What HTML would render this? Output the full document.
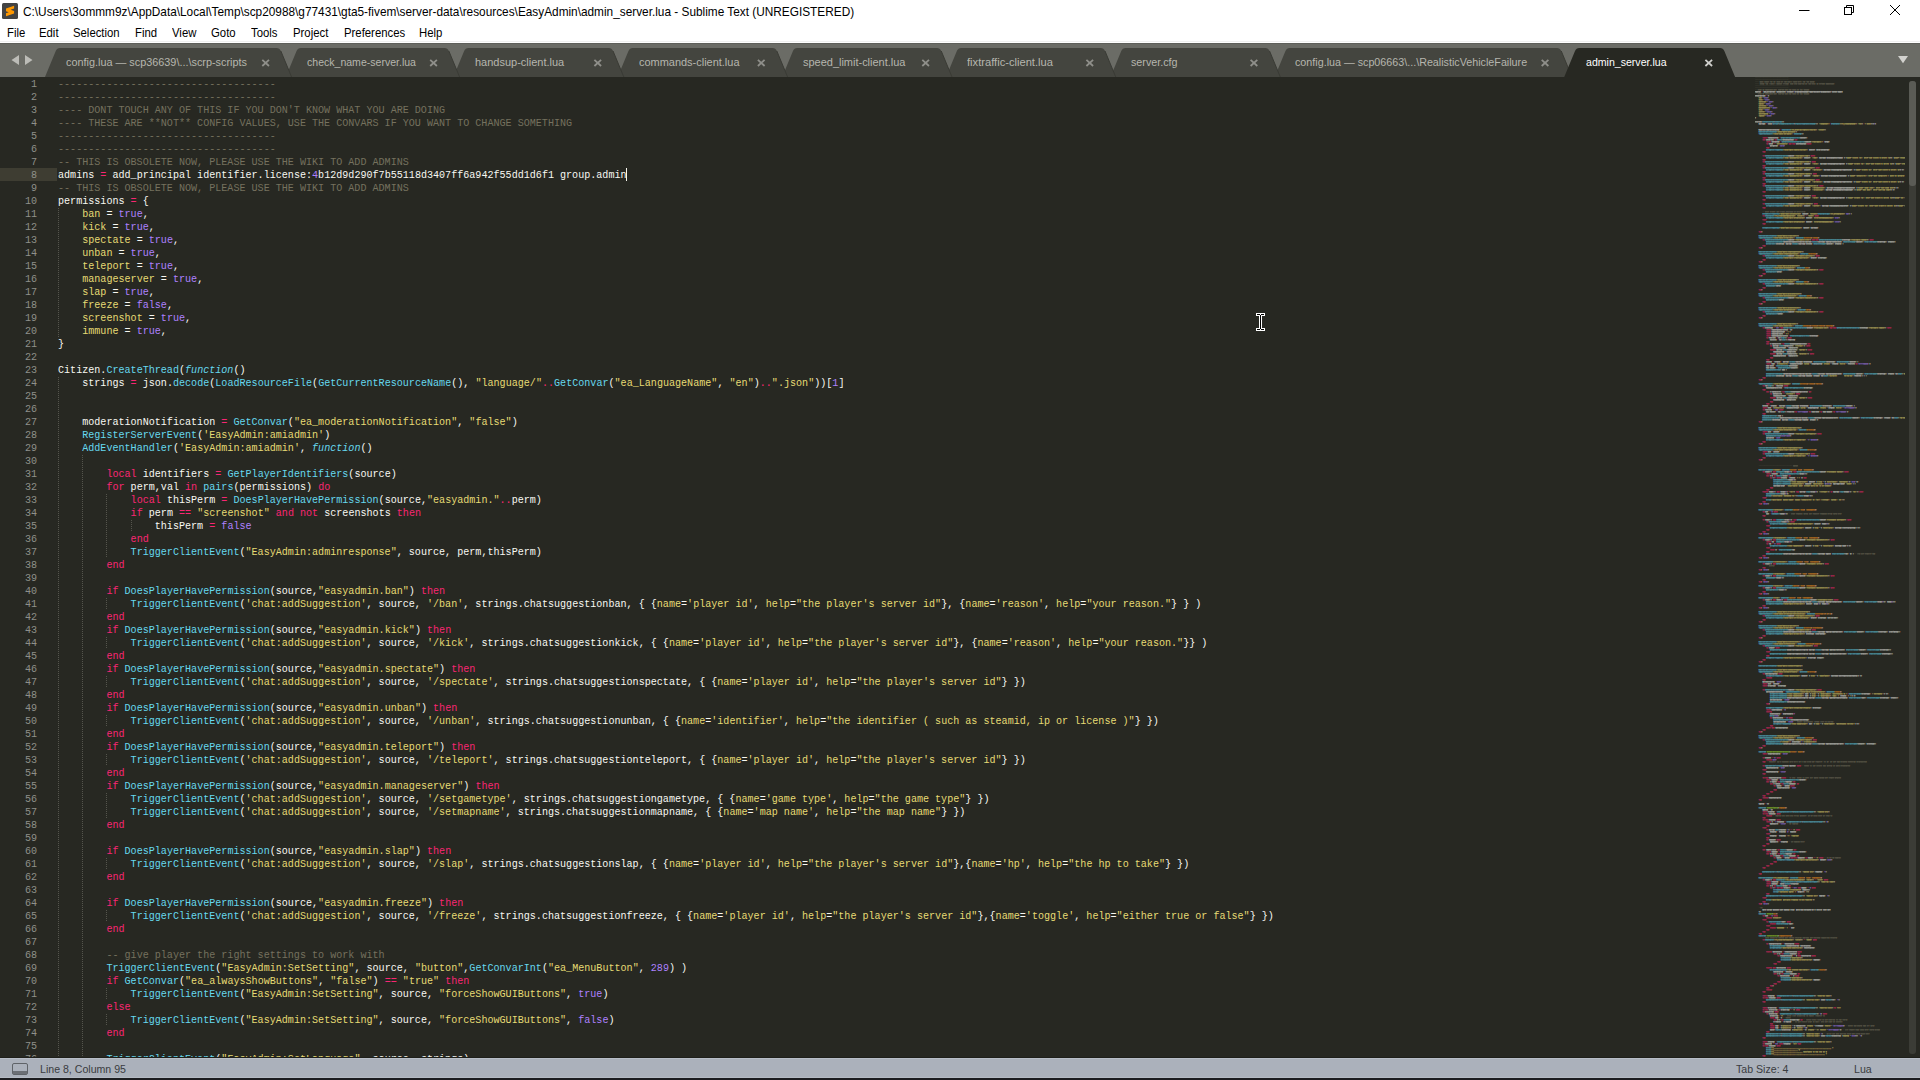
<!DOCTYPE html>
<html><head><meta charset="utf-8"><title>admin_server.lua - Sublime Text</title>
<style>*{margin:0;padding:0;box-sizing:border-box}
html,body{width:1920px;height:1080px;overflow:hidden;background:#fff;position:relative;font-family:"Liberation Sans",sans-serif}
.abs{position:absolute}
#title{position:absolute;left:23px;top:3px;font-size:12.8px;line-height:18px;color:#000;white-space:pre;transform:scaleX(0.924);transform-origin:0 0}
.menu{position:absolute;top:24px;font-size:12px;line-height:18px;color:#000;white-space:pre;transform:scaleX(0.945);transform-origin:0 0}
#tabbar{position:absolute;left:0;top:43px;width:1920px;height:34px;background:#6b6c66;border-top:1px solid #5e5f5a}
.tab{position:absolute;top:48px;height:29px}
.tab svg{position:absolute;left:0;top:0;overflow:visible}
.tabt{position:absolute;top:52.5px;font-size:11.6px;line-height:18px;color:#b6b6ae;white-space:pre;transform-origin:0 0}
.tabx{position:absolute;top:59px;width:8px;height:8px}
#editor{position:absolute;left:0;top:77px;width:1920px;height:981px;background:#272822;overflow:hidden}
pre{font-family:"Liberation Mono",monospace;font-size:10.08px;line-height:13px;white-space:pre}
#code{position:absolute;left:58px;top:78px;color:#f8f8f2}
#nums{position:absolute;left:0;width:37px;top:78px;color:#8f908a;text-align:right}
i{font-style:normal}
i.c{color:#75715e} i.s{color:#e6db74} i.k{color:#f92672} i.F{color:#66d9ef} i.n{color:#ae81ff} i.p{color:#fd971f;font-style:italic} i.d{color:#a6e22e} i.f{color:#66d9ef;font-style:italic}
.g{position:absolute;width:1px;background-image:linear-gradient(to bottom,transparent 0,transparent 1px,#55554d 1px,#55554d 2px);background-size:1px 2px}
#mini{position:absolute;left:1755px;top:77px;transform-origin:0 0;transform:scale(0.15385);color:#f8f8f2;-webkit-text-stroke:1.4px currentColor;text-shadow:0 2px 0 currentColor,0 -2px 0 currentColor,0 4px 0 currentColor,0 -4px 0 currentColor;opacity:.55}
#status{position:absolute;left:0;top:1058px;width:1920px;height:20px;background:#abb1bb;border-top:1px solid #b8bec8;border-bottom:1px solid #b5bbc4}
#bottom{position:absolute;left:0;top:1078px;width:1920px;height:2px;background:#1c1d20}
.st{position:absolute;top:1062px;font-size:10.6px;line-height:14px;color:#3a3c40;white-space:pre}
</style></head>
<body>
<!-- title bar -->
<div class="abs" style="left:2px;top:3px;width:16px;height:16px;background:#434343;border-radius:1.5px"></div>
<svg class="abs" style="left:2px;top:3px" width="16" height="16" viewBox="0 0 16 16"><path d="M12.1 2.8 L12.1 5.6 L8.6 6.8 L12.1 8.1 L12.1 10.6 L4.0 13.2 L4.0 10.3 L6.8 9.3 L4.0 8.2 L4.0 5.4 Z" fill="#ff9800"/></svg>
<div id="title">C:\Users\3ommm9z\AppData\Local\Temp\scp20988\g77431\gta5-fivem\server-data\resources\EasyAdmin\admin_server.lua - Sublime Text (UNREGISTERED)</div>
<svg class="abs" style="left:1790px;top:0" width="130" height="22" viewBox="0 0 130 22">
<line x1="9" y1="10.5" x2="19.5" y2="10.5" stroke="#000" stroke-width="1"/>
<rect x="54.5" y="7.5" width="7" height="7" fill="none" stroke="#000" stroke-width="1"/>
<path d="M56.5 7.5 V5.5 H63.5 V12.5 H61.5" fill="none" stroke="#000" stroke-width="1"/>
<path d="M100 5 L110 15 M110 5 L100 15" stroke="#000" stroke-width="1"/>
</svg>
<div class="menu" style="left:7px">File</div>
<div class="menu" style="left:39px">Edit</div>
<div class="menu" style="left:73px">Selection</div>
<div class="menu" style="left:135px">Find</div>
<div class="menu" style="left:172px">View</div>
<div class="menu" style="left:211px">Goto</div>
<div class="menu" style="left:251px">Tools</div>
<div class="menu" style="left:293px">Project</div>
<div class="menu" style="left:344px">Preferences</div>
<div class="menu" style="left:419px">Help</div>
<div class="abs" style="left:0;top:41px;width:1920px;height:1px;background:#f0f0f0"></div>
<!-- tab bar -->
<div id="tabbar"></div>
<svg class="abs" style="left:0;top:48px" width="1920" height="29" viewBox="0 0 1920 29">
<path d="M1274.70 29 L1285.46 3.00 Q1286.70 0 1289.70 0 L1557.00 0 Q1560.00 0 1561.24 3.00 L1572.00 29 Z" fill="#44453f"/>
<path d="M1561.24 3.00 L1572.00 29" stroke="#3a3b35" stroke-width="1" fill="none"/>
<path d="M1110.50 29 L1121.26 3.00 Q1122.50 0 1125.50 0 L1265.30 0 Q1268.30 0 1269.54 3.00 L1280.30 29 Z" fill="#44453f"/>
<path d="M1269.54 3.00 L1280.30 29" stroke="#3a3b35" stroke-width="1" fill="none"/>
<path d="M946.10 29 L956.86 3.00 Q958.10 0 961.10 0 L1100.75 0 Q1103.75 0 1104.99 3.00 L1115.75 29 Z" fill="#44453f"/>
<path d="M1104.99 3.00 L1115.75 29" stroke="#3a3b35" stroke-width="1" fill="none"/>
<path d="M782.20 29 L792.96 3.00 Q794.20 0 797.20 0 L937.00 0 Q940.00 0 941.24 3.00 L952.00 29 Z" fill="#44453f"/>
<path d="M941.24 3.00 L952.00 29" stroke="#3a3b35" stroke-width="1" fill="none"/>
<path d="M617.70 29 L628.46 3.00 Q629.70 0 632.70 0 L772.60 0 Q775.60 0 776.84 3.00 L787.60 29 Z" fill="#44453f"/>
<path d="M776.84 3.00 L787.60 29" stroke="#3a3b35" stroke-width="1" fill="none"/>
<path d="M453.40 29 L464.16 3.00 Q465.40 0 468.40 0 L608.80 0 Q611.80 0 613.04 3.00 L623.80 29 Z" fill="#44453f"/>
<path d="M613.04 3.00 L623.80 29" stroke="#3a3b35" stroke-width="1" fill="none"/>
<path d="M285.80 29 L296.56 3.00 Q297.80 0 300.80 0 L444.60 0 Q447.60 0 448.84 3.00 L459.60 29 Z" fill="#44453f"/>
<path d="M448.84 3.00 L459.60 29" stroke="#3a3b35" stroke-width="1" fill="none"/>
<path d="M45.00 29 L55.76 3.00 Q57.00 0 60.00 0 L276.60 0 Q279.60 0 280.84 3.00 L291.60 29 Z" fill="#44453f"/>
<path d="M280.84 3.00 L291.60 29" stroke="#3a3b35" stroke-width="1" fill="none"/>
<path d="M1564.25 29 L1575.01 3.00 Q1576.25 0 1579.25 0 L1720.10 0 Q1723.10 0 1724.34 3.00 L1735.10 29 Z" fill="#272822"/>
<path d="M262.30 11.8 L269.00 18 M269.00 11.8 L262.30 18" stroke="#8f8f8a" stroke-width="1.8"/>
<path d="M430.20 11.8 L436.90 18 M436.90 11.8 L430.20 18" stroke="#8f8f8a" stroke-width="1.8"/>
<path d="M594.40 11.8 L601.10 18 M601.10 11.8 L594.40 18" stroke="#8f8f8a" stroke-width="1.8"/>
<path d="M757.90 11.8 L764.60 18 M764.60 11.8 L757.90 18" stroke="#8f8f8a" stroke-width="1.8"/>
<path d="M922.30 11.8 L929.00 18 M929.00 11.8 L922.30 18" stroke="#8f8f8a" stroke-width="1.8"/>
<path d="M1086.40 11.8 L1093.10 18 M1093.10 11.8 L1086.40 18" stroke="#8f8f8a" stroke-width="1.8"/>
<path d="M1250.60 11.8 L1257.30 18 M1257.30 11.8 L1250.60 18" stroke="#8f8f8a" stroke-width="1.8"/>
<path d="M1541.70 11.8 L1548.40 18 M1548.40 11.8 L1541.70 18" stroke="#8f8f8a" stroke-width="1.8"/>
<path d="M1705.40 11.8 L1712.10 18 M1712.10 11.8 L1705.40 18" stroke="#cfcfcc" stroke-width="1.8"/>
<path d="M11.5 12 L19 7 L19 17 Z M32.5 12 L25 7 L25 17 Z" fill="#bcbcb7"/>
<path d="M1898 8 L1908 8 L1903 15.2 Z" fill="#d2d2ce"/>
</svg>
<div class="tabt" style="left:65.80px;transform:scaleX(0.936)">config.lua — scp36639\...\scrp-scripts</div>
<div class="tabt" style="left:306.90px;transform:scaleX(0.909)">check_name-server.lua</div>
<div class="tabt" style="left:474.80px;transform:scaleX(0.948)">handsup-client.lua</div>
<div class="tabt" style="left:638.75px;transform:scaleX(0.945)">commands-client.lua</div>
<div class="tabt" style="left:803.10px;transform:scaleX(0.946)">speed_limit-client.lua</div>
<div class="tabt" style="left:967.10px;transform:scaleX(0.962)">fixtraffic-client.lua</div>
<div class="tabt" style="left:1130.90px;transform:scaleX(0.926)">server.cfg</div>
<div class="tabt" style="left:1295.00px;transform:scaleX(0.926)">config.lua — scp06663\...\RealisticVehicleFailure</div>
<div class="tabt" style="left:1586.25px;color:#fff;transform:scaleX(0.912)">admin_server.lua</div>
<!-- editor -->
<div id="editor"></div>
<div class="abs" style="left:0;top:168px;width:57px;height:13px;background:#3e3d32"></div>
<div class="g" style="left:58px;top:207px;height:130px"></div><div class="g" style="left:58px;top:376px;height:689px"></div><div class="g" style="left:82px;top:454px;height:611px"></div><div class="g" style="left:106px;top:493px;height:65px"></div><div class="g" style="left:106px;top:597px;height:13px"></div><div class="g" style="left:106px;top:636px;height:13px"></div><div class="g" style="left:106px;top:675px;height:13px"></div><div class="g" style="left:106px;top:714px;height:13px"></div><div class="g" style="left:106px;top:753px;height:13px"></div><div class="g" style="left:106px;top:792px;height:26px"></div><div class="g" style="left:106px;top:857px;height:13px"></div><div class="g" style="left:106px;top:909px;height:13px"></div><div class="g" style="left:106px;top:987px;height:13px"></div><div class="g" style="left:106px;top:1013px;height:13px"></div><div class="g" style="left:131px;top:519px;height:13px"></div>
<pre id="nums">1
2
3
4
5
6
7
8
9
10
11
12
13
14
15
16
17
18
19
20
21
22
23
24
25
26
27
28
29
30
31
32
33
34
35
36
37
38
39
40
41
42
43
44
45
46
47
48
49
50
51
52
53
54
55
56
57
58
59
60
61
62
63
64
65
66
67
68
69
70
71
72
73
74
75
76</pre>
<pre id="code"><i class="c">------------------------------------</i>
<i class="c">------------------------------------</i>
<i class="c">---- DONT TOUCH ANY OF THIS IF YOU DON'T KNOW WHAT YOU ARE DOING</i>
<i class="c">---- THESE ARE **NOT** CONFIG VALUES, USE THE CONVARS IF YOU WANT TO CHANGE SOMETHING</i>
<i class="c">------------------------------------</i>
<i class="c">------------------------------------</i>
<i class="c">-- THIS IS OBSOLETE NOW, PLEASE USE THE WIKI TO ADD ADMINS</i>
admins <i class="k">=</i> add_principal identifier.license:<i class="n">4</i>b12d9d290f7b55118d3407ff6a942f55dd1d6f1 group.admin
<i class="c">-- THIS IS OBSOLETE NOW, PLEASE USE THE WIKI TO ADD ADMINS</i>
permissions <i class="k">=</i> {
    <i class="s">ban</i> = <i class="n">true</i>,
    <i class="s">kick</i> = <i class="n">true</i>,
    <i class="s">spectate</i> = <i class="n">true</i>,
    <i class="s">unban</i> = <i class="n">true</i>,
    <i class="s">teleport</i> = <i class="n">true</i>,
    <i class="s">manageserver</i> = <i class="n">true</i>,
    <i class="s">slap</i> = <i class="n">true</i>,
    <i class="s">freeze</i> = <i class="n">false</i>,
    <i class="s">screenshot</i> = <i class="n">true</i>,
    <i class="s">immune</i> = <i class="n">true</i>,
}

Citizen.<i class="F">CreateThread</i>(<i class="f">function</i>()
    strings <i class="k">=</i> json.<i class="F">decode</i>(<i class="F">LoadResourceFile</i>(<i class="F">GetCurrentResourceName</i>(), <i class="s">"language/"</i><i class="k">..</i><i class="F">GetConvar</i>(<i class="s">"ea_LanguageName"</i>, <i class="s">"en"</i>)<i class="k">..</i><i class="s">".json"</i>))[<i class="n">1</i>]


    moderationNotification <i class="k">=</i> <i class="F">GetConvar</i>(<i class="s">"ea_moderationNotification"</i>, <i class="s">"false"</i>)
    <i class="F">RegisterServerEvent</i>(<i class="s">'EasyAdmin:amiadmin'</i>)
    <i class="F">AddEventHandler</i>(<i class="s">'EasyAdmin:amiadmin'</i>, <i class="f">function</i>()

        <i class="k">local</i> identifiers <i class="k">=</i> <i class="F">GetPlayerIdentifiers</i>(source)
        <i class="k">for</i> perm,val <i class="k">in</i> <i class="F">pairs</i>(permissions) <i class="k">do</i>
            <i class="k">local</i> thisPerm <i class="k">=</i> <i class="F">DoesPlayerHavePermission</i>(source,<i class="s">"easyadmin."</i><i class="k">..</i>perm)
            <i class="k">if</i> perm <i class="k">==</i> <i class="s">"screenshot"</i> <i class="k">and</i> <i class="k">not</i> screenshots <i class="k">then</i>
                thisPerm <i class="k">=</i> <i class="n">false</i>
            <i class="k">end</i>
            <i class="F">TriggerClientEvent</i>(<i class="s">"EasyAdmin:adminresponse"</i>, source, perm,thisPerm)
        <i class="k">end</i>

        <i class="k">if</i> <i class="F">DoesPlayerHavePermission</i>(source,<i class="s">"easyadmin.ban"</i>) <i class="k">then</i>
            <i class="F">TriggerClientEvent</i>(<i class="s">'chat:addSuggestion'</i>, source, <i class="s">'/ban'</i>, strings.chatsuggestionban, { {<i class="s">name</i>=<i class="s">'player id'</i>, <i class="s">help</i>=<i class="s">"the player's server id"</i>}, {<i class="s">name</i>=<i class="s">'reason'</i>, <i class="s">help</i>=<i class="s">"your reason."</i>} } )
        <i class="k">end</i>
        <i class="k">if</i> <i class="F">DoesPlayerHavePermission</i>(source,<i class="s">"easyadmin.kick"</i>) <i class="k">then</i>
            <i class="F">TriggerClientEvent</i>(<i class="s">'chat:addSuggestion'</i>, source, <i class="s">'/kick'</i>, strings.chatsuggestionkick, { {<i class="s">name</i>=<i class="s">'player id'</i>, <i class="s">help</i>=<i class="s">"the player's server id"</i>}, {<i class="s">name</i>=<i class="s">'reason'</i>, <i class="s">help</i>=<i class="s">"your reason."</i>}} )
        <i class="k">end</i>
        <i class="k">if</i> <i class="F">DoesPlayerHavePermission</i>(source,<i class="s">"easyadmin.spectate"</i>) <i class="k">then</i>
            <i class="F">TriggerClientEvent</i>(<i class="s">'chat:addSuggestion'</i>, source, <i class="s">'/spectate'</i>, strings.chatsuggestionspectate, { {<i class="s">name</i>=<i class="s">'player id'</i>, <i class="s">help</i>=<i class="s">"the player's server id"</i>} })
        <i class="k">end</i>
        <i class="k">if</i> <i class="F">DoesPlayerHavePermission</i>(source,<i class="s">"easyadmin.unban"</i>) <i class="k">then</i>
            <i class="F">TriggerClientEvent</i>(<i class="s">'chat:addSuggestion'</i>, source, <i class="s">'/unban'</i>, strings.chatsuggestionunban, { {<i class="s">name</i>=<i class="s">'identifier'</i>, <i class="s">help</i>=<i class="s">"the identifier ( such as steamid, ip or license )"</i>} })
        <i class="k">end</i>
        <i class="k">if</i> <i class="F">DoesPlayerHavePermission</i>(source,<i class="s">"easyadmin.teleport"</i>) <i class="k">then</i>
            <i class="F">TriggerClientEvent</i>(<i class="s">'chat:addSuggestion'</i>, source, <i class="s">'/teleport'</i>, strings.chatsuggestionteleport, { {<i class="s">name</i>=<i class="s">'player id'</i>, <i class="s">help</i>=<i class="s">"the player's server id"</i>} })
        <i class="k">end</i>
        <i class="k">if</i> <i class="F">DoesPlayerHavePermission</i>(source,<i class="s">"easyadmin.manageserver"</i>) <i class="k">then</i>
            <i class="F">TriggerClientEvent</i>(<i class="s">'chat:addSuggestion'</i>, source, <i class="s">'/setgametype'</i>, strings.chatsuggestiongametype, { {<i class="s">name</i>=<i class="s">'game type'</i>, <i class="s">help</i>=<i class="s">"the game type"</i>} })
            <i class="F">TriggerClientEvent</i>(<i class="s">'chat:addSuggestion'</i>, source, <i class="s">'/setmapname'</i>, strings.chatsuggestionmapname, { {<i class="s">name</i>=<i class="s">'map name'</i>, <i class="s">help</i>=<i class="s">"the map name"</i>} })
        <i class="k">end</i>

        <i class="k">if</i> <i class="F">DoesPlayerHavePermission</i>(source,<i class="s">"easyadmin.slap"</i>) <i class="k">then</i>
            <i class="F">TriggerClientEvent</i>(<i class="s">'chat:addSuggestion'</i>, source, <i class="s">'/slap'</i>, strings.chatsuggestionslap, { {<i class="s">name</i>=<i class="s">'player id'</i>, <i class="s">help</i>=<i class="s">"the player's server id"</i>},{<i class="s">name</i>=<i class="s">'hp'</i>, <i class="s">help</i>=<i class="s">"the hp to take"</i>} })
        <i class="k">end</i>

        <i class="k">if</i> <i class="F">DoesPlayerHavePermission</i>(source,<i class="s">"easyadmin.freeze"</i>) <i class="k">then</i>
            <i class="F">TriggerClientEvent</i>(<i class="s">'chat:addSuggestion'</i>, source, <i class="s">'/freeze'</i>, strings.chatsuggestionfreeze, { {<i class="s">name</i>=<i class="s">'player id'</i>, <i class="s">help</i>=<i class="s">"the player's server id"</i>},{<i class="s">name</i>=<i class="s">'toggle'</i>, <i class="s">help</i>=<i class="s">"either true or false"</i>} })
        <i class="k">end</i>

        <i class="c">-- give player the right settings to work with</i>
        <i class="F">TriggerClientEvent</i>(<i class="s">"EasyAdmin:SetSetting"</i>, source, <i class="s">"button"</i>,<i class="F">GetConvarInt</i>(<i class="s">"ea_MenuButton"</i>, <i class="n">289</i>) )
        <i class="k">if</i> <i class="F">GetConvar</i>(<i class="s">"ea_alwaysShowButtons"</i>, <i class="s">"false"</i>) <i class="k">==</i> <i class="s">"true"</i> <i class="k">then</i>
            <i class="F">TriggerClientEvent</i>(<i class="s">"EasyAdmin:SetSetting"</i>, source, <i class="s">"forceShowGUIButtons"</i>, <i class="n">true</i>)
        <i class="k">else</i>
            <i class="F">TriggerClientEvent</i>(<i class="s">"EasyAdmin:SetSetting"</i>, source, <i class="s">"forceShowGUIButtons"</i>, <i class="n">false</i>)
        <i class="k">end</i>

        <i class="F">TriggerClientEvent</i>(<i class="s">"EasyAdmin:SetLanguage"</i>, source, strings)</pre>
<div class="abs" style="left:626px;top:168px;width:1px;height:13px;background:#f8f8f0"></div>
<div class="abs" style="left:1755px;top:77px;width:150px;height:981px;overflow:hidden">
<pre id="mini" style="left:0;top:0"><i class="c">------------------------------------</i>
<i class="c">------------------------------------</i>
<i class="c">---- DONT TOUCH ANY OF THIS IF YOU DON'T KNOW WHAT YOU ARE DOING</i>
<i class="c">---- THESE ARE **NOT** CONFIG VALUES, USE THE CONVARS IF YOU WANT TO CHANGE SOMETHING</i>
<i class="c">------------------------------------</i>
<i class="c">------------------------------------</i>
<i class="c">-- THIS IS OBSOLETE NOW, PLEASE USE THE WIKI TO ADD ADMINS</i>
admins <i class="k">=</i> add_principal identifier.license:<i class="n">4</i>b12d9d290f7b55118d3407ff6a942f55dd1d6f1 group.admin
<i class="c">-- THIS IS OBSOLETE NOW, PLEASE USE THE WIKI TO ADD ADMINS</i>
permissions <i class="k">=</i> {
    <i class="s">ban</i> = <i class="n">true</i>,
    <i class="s">kick</i> = <i class="n">true</i>,
    <i class="s">spectate</i> = <i class="n">true</i>,
    <i class="s">unban</i> = <i class="n">true</i>,
    <i class="s">teleport</i> = <i class="n">true</i>,
    <i class="s">manageserver</i> = <i class="n">true</i>,
    <i class="s">slap</i> = <i class="n">true</i>,
    <i class="s">freeze</i> = <i class="n">false</i>,
    <i class="s">screenshot</i> = <i class="n">true</i>,
    <i class="s">immune</i> = <i class="n">true</i>,
}

Citizen.<i class="F">CreateThread</i>(<i class="f">function</i>()
    strings <i class="k">=</i> json.<i class="F">decode</i>(<i class="F">LoadResourceFile</i>(<i class="F">GetCurrentResourceName</i>(), <i class="s">"language/"</i><i class="k">..</i><i class="F">GetConvar</i>(<i class="s">"ea_LanguageName"</i>, <i class="s">"en"</i>)<i class="k">..</i><i class="s">".json"</i>))[<i class="n">1</i>]


    moderationNotification <i class="k">=</i> <i class="F">GetConvar</i>(<i class="s">"ea_moderationNotification"</i>, <i class="s">"false"</i>)
    <i class="F">RegisterServerEvent</i>(<i class="s">'EasyAdmin:amiadmin'</i>)
    <i class="F">AddEventHandler</i>(<i class="s">'EasyAdmin:amiadmin'</i>, <i class="f">function</i>()

        <i class="k">local</i> identifiers <i class="k">=</i> <i class="F">GetPlayerIdentifiers</i>(source)
        <i class="k">for</i> perm,val <i class="k">in</i> <i class="F">pairs</i>(permissions) <i class="k">do</i>
            <i class="k">local</i> thisPerm <i class="k">=</i> <i class="F">DoesPlayerHavePermission</i>(source,<i class="s">"easyadmin."</i><i class="k">..</i>perm)
            <i class="k">if</i> perm <i class="k">==</i> <i class="s">"screenshot"</i> <i class="k">and</i> <i class="k">not</i> screenshots <i class="k">then</i>
                thisPerm <i class="k">=</i> <i class="n">false</i>
            <i class="k">end</i>
            <i class="F">TriggerClientEvent</i>(<i class="s">"EasyAdmin:adminresponse"</i>, source, perm,thisPerm)
        <i class="k">end</i>

        <i class="k">if</i> <i class="F">DoesPlayerHavePermission</i>(source,<i class="s">"easyadmin.ban"</i>) <i class="k">then</i>
            <i class="F">TriggerClientEvent</i>(<i class="s">'chat:addSuggestion'</i>, source, <i class="s">'/ban'</i>, strings.chatsuggestionban, { {<i class="s">name</i>=<i class="s">'player id'</i>, <i class="s">help</i>=<i class="s">"the player's server id"</i>}, {<i class="s">name</i>=<i class="s">'reason'</i>, <i class="s">help</i>=<i class="s">"your reason."</i>} } )
        <i class="k">end</i>
        <i class="k">if</i> <i class="F">DoesPlayerHavePermission</i>(source,<i class="s">"easyadmin.kick"</i>) <i class="k">then</i>
            <i class="F">TriggerClientEvent</i>(<i class="s">'chat:addSuggestion'</i>, source, <i class="s">'/kick'</i>, strings.chatsuggestionkick, { {<i class="s">name</i>=<i class="s">'player id'</i>, <i class="s">help</i>=<i class="s">"the player's server id"</i>}, {<i class="s">name</i>=<i class="s">'reason'</i>, <i class="s">help</i>=<i class="s">"your reason."</i>}} )
        <i class="k">end</i>
        <i class="k">if</i> <i class="F">DoesPlayerHavePermission</i>(source,<i class="s">"easyadmin.spectate"</i>) <i class="k">then</i>
            <i class="F">TriggerClientEvent</i>(<i class="s">'chat:addSuggestion'</i>, source, <i class="s">'/spectate'</i>, strings.chatsuggestionspectate, { {<i class="s">name</i>=<i class="s">'player id'</i>, <i class="s">help</i>=<i class="s">"the player's server id"</i>} })
        <i class="k">end</i>
        <i class="k">if</i> <i class="F">DoesPlayerHavePermission</i>(source,<i class="s">"easyadmin.unban"</i>) <i class="k">then</i>
            <i class="F">TriggerClientEvent</i>(<i class="s">'chat:addSuggestion'</i>, source, <i class="s">'/unban'</i>, strings.chatsuggestionunban, { {<i class="s">name</i>=<i class="s">'identifier'</i>, <i class="s">help</i>=<i class="s">"the identifier ( such as steamid, ip or license )"</i>} })
        <i class="k">end</i>
        <i class="k">if</i> <i class="F">DoesPlayerHavePermission</i>(source,<i class="s">"easyadmin.teleport"</i>) <i class="k">then</i>
            <i class="F">TriggerClientEvent</i>(<i class="s">'chat:addSuggestion'</i>, source, <i class="s">'/teleport'</i>, strings.chatsuggestionteleport, { {<i class="s">name</i>=<i class="s">'player id'</i>, <i class="s">help</i>=<i class="s">"the player's server id"</i>} })
        <i class="k">end</i>
        <i class="k">if</i> <i class="F">DoesPlayerHavePermission</i>(source,<i class="s">"easyadmin.manageserver"</i>) <i class="k">then</i>
            <i class="F">TriggerClientEvent</i>(<i class="s">'chat:addSuggestion'</i>, source, <i class="s">'/setgametype'</i>, strings.chatsuggestiongametype, { {<i class="s">name</i>=<i class="s">'game type'</i>, <i class="s">help</i>=<i class="s">"the game type"</i>} })
            <i class="F">TriggerClientEvent</i>(<i class="s">'chat:addSuggestion'</i>, source, <i class="s">'/setmapname'</i>, strings.chatsuggestionmapname, { {<i class="s">name</i>=<i class="s">'map name'</i>, <i class="s">help</i>=<i class="s">"the map name"</i>} })
        <i class="k">end</i>

        <i class="k">if</i> <i class="F">DoesPlayerHavePermission</i>(source,<i class="s">"easyadmin.slap"</i>) <i class="k">then</i>
            <i class="F">TriggerClientEvent</i>(<i class="s">'chat:addSuggestion'</i>, source, <i class="s">'/slap'</i>, strings.chatsuggestionslap, { {<i class="s">name</i>=<i class="s">'player id'</i>, <i class="s">help</i>=<i class="s">"the player's server id"</i>},{<i class="s">name</i>=<i class="s">'hp'</i>, <i class="s">help</i>=<i class="s">"the hp to take"</i>} })
        <i class="k">end</i>

        <i class="k">if</i> <i class="F">DoesPlayerHavePermission</i>(source,<i class="s">"easyadmin.freeze"</i>) <i class="k">then</i>
            <i class="F">TriggerClientEvent</i>(<i class="s">'chat:addSuggestion'</i>, source, <i class="s">'/freeze'</i>, strings.chatsuggestionfreeze, { {<i class="s">name</i>=<i class="s">'player id'</i>, <i class="s">help</i>=<i class="s">"the player's server id"</i>},{<i class="s">name</i>=<i class="s">'toggle'</i>, <i class="s">help</i>=<i class="s">"either true or false"</i>} })
        <i class="k">end</i>

        <i class="c">-- give player the right settings to work with</i>
        <i class="F">TriggerClientEvent</i>(<i class="s">"EasyAdmin:SetSetting"</i>, source, <i class="s">"button"</i>,<i class="F">GetConvarInt</i>(<i class="s">"ea_MenuButton"</i>, <i class="n">289</i>) )
        <i class="k">if</i> <i class="F">GetConvar</i>(<i class="s">"ea_alwaysShowButtons"</i>, <i class="s">"false"</i>) <i class="k">==</i> <i class="s">"true"</i> <i class="k">then</i>
            <i class="F">TriggerClientEvent</i>(<i class="s">"EasyAdmin:SetSetting"</i>, source, <i class="s">"forceShowGUIButtons"</i>, <i class="n">true</i>)
        <i class="k">else</i>
            <i class="F">TriggerClientEvent</i>(<i class="s">"EasyAdmin:SetSetting"</i>, source, <i class="s">"forceShowGUIButtons"</i>, <i class="n">false</i>)
        <i class="k">end</i>

        <i class="F">TriggerClientEvent</i>(<i class="s">"EasyAdmin:SetLanguage"</i>, source, strings)

    <i class="k">end</i>)

    <i class="F">RegisterServerEvent</i>(<i class="s">"EasyAdmin:kickPlayer"</i>)
    <i class="F">AddEventHandler</i>(<i class="s">'EasyAdmin:kickPlayer'</i>, <i class="f">function</i>(<i class="p">playerId</i>,<i class="p">reason</i>)
        <i class="k">if</i> <i class="F">DoesPlayerHavePermission</i>(source,<i class="s">"easyadmin.kick"</i>) <i class="k">and</i> <i class="k">not</i> <i class="F">DoesPlayerHavePermission</i>(playerId,<i class="s">"easyadmin.immune"</i>) <i class="k">then</i>
            <i class="F">SendWebhookMessage</i>(moderationNotification,string.<i class="F">format</i>(strings.adminkickedplayer, <i class="F">GetPlayerName</i>(source), <i class="F">GetPlayerName</i>(playerId), reason))
            <i class="F">DropPlayer</i>(playerId, string.<i class="F">format</i>(strings.kicked, <i class="F">GetPlayerName</i>(source), reason) )
        <i class="k">end</i>
    <i class="k">end</i>)

    <i class="F">RegisterServerEvent</i>(<i class="s">"EasyAdmin:requestSpectate"</i>)
    <i class="F">AddEventHandler</i>(<i class="s">'EasyAdmin:requestSpectate'</i>, <i class="f">function</i>(<i class="p">playerId</i>)
        <i class="k">if</i> <i class="F">DoesPlayerHavePermission</i>(source,<i class="s">"easyadmin.spectate"</i>) <i class="k">then</i>
            <i class="F">TriggerClientEvent</i>(<i class="s">"EasyAdmin:requestSpectate"</i>, source, playerId)
        <i class="k">end</i>
    <i class="k">end</i>)

    <i class="F">RegisterServerEvent</i>(<i class="s">"EasyAdmin:SetGameType"</i>)
    <i class="F">AddEventHandler</i>(<i class="s">'EasyAdmin:SetGameType'</i>, <i class="f">function</i>(<i class="p">text</i>)
        <i class="k">if</i> <i class="F">DoesPlayerHavePermission</i>(source,<i class="s">"easyadmin.manageserver"</i>) <i class="k">then</i>
            <i class="F">SetGameType</i>(text)
        <i class="k">end</i>
    <i class="k">end</i>)

    <i class="F">RegisterServerEvent</i>(<i class="s">"EasyAdmin:SetMapName"</i>)
    <i class="F">AddEventHandler</i>(<i class="s">'EasyAdmin:SetMapName'</i>, <i class="f">function</i>(<i class="p">text</i>)
        <i class="k">if</i> <i class="F">DoesPlayerHavePermission</i>(source,<i class="s">"easyadmin.manageserver"</i>) <i class="k">then</i>
            <i class="F">SetMapName</i>(text)
        <i class="k">end</i>
    <i class="k">end</i>)

    <i class="F">RegisterServerEvent</i>(<i class="s">"EasyAdmin:StartResource"</i>)
    <i class="F">AddEventHandler</i>(<i class="s">'EasyAdmin:StartResource'</i>, <i class="f">function</i>(<i class="p">text</i>)
        <i class="k">if</i> <i class="F">DoesPlayerHavePermission</i>(source,<i class="s">"easyadmin.manageserver"</i>) <i class="k">then</i>
            <i class="F">StartResource</i>(text)
        <i class="k">end</i>
    <i class="k">end</i>)

    <i class="F">RegisterServerEvent</i>(<i class="s">"EasyAdmin:StopResource"</i>)
    <i class="F">AddEventHandler</i>(<i class="s">'EasyAdmin:StopResource'</i>, <i class="f">function</i>(<i class="p">text</i>)
        <i class="k">if</i> <i class="F">DoesPlayerHavePermission</i>(source,<i class="s">"easyadmin.manageserver"</i>) <i class="k">then</i>
            <i class="F">StopResource</i>(text)
        <i class="k">end</i>
    <i class="k">end</i>)


    <i class="F">RegisterServerEvent</i>(<i class="s">"EasyAdmin:banPlayer"</i>)
    <i class="F">AddEventHandler</i>(<i class="s">'EasyAdmin:banPlayer'</i>, <i class="f">function</i>(<i class="p">playerId</i>,<i class="p">reason</i>,<i class="p">expires</i>,<i class="p">username</i>)
        <i class="k">if</i> playerId <i class="k">~=</i> <i class="n">nil</i> <i class="k">and</i> <i class="F">DoesPlayerHavePermission</i>(source,<i class="s">"easyadmin.ban"</i>) <i class="k">and</i> <i class="k">not</i> <i class="F">DoesPlayerHavePermission</i>(playerId,<i class="s">"easyadmin.immune"</i>) <i class="k">then</i>
            <i class="k">local</i> bannedIdentifiers <i class="k">=</i> {}
            <i class="k">local</i> bannedUsername <i class="k">=</i> <i class="s">"-"</i>
            <i class="k">local</i> bannedPlayer <i class="k">=</i> <i class="s">","</i>
            <i class="k">local</i> bannedIdentifiers <i class="k">=</i> <i class="F">GetPlayerIdentifiers</i>(playerId)
            <i class="k">if</i> expires <i class="k">&lt;</i> os.<i class="F">time</i>() <i class="k">then</i>
                expires <i class="k">=</i> os.<i class="F">time</i>()<i class="k">+</i>expires
            <i class="k">end</i>
            <i class="k">for</i> i,identifier <i class="k">in</i> <i class="F">pairs</i>(bannedIdentifiers) <i class="k">do</i>
                <i class="k">if</i> string.<i class="F">find</i>(identifier, <i class="s">"license:"</i>) <i class="k">then</i>
                    bannedLicense <i class="k">=</i> identifier
                <i class="k">elseif</i> string.<i class="F">find</i>(identifier, <i class="s">"steam:"</i>) <i class="k">then</i>
                    bannedSteam <i class="k">=</i> identifier
                <i class="k">elseif</i> string.<i class="F">find</i>(identifier, <i class="s">"discord:"</i>) <i class="k">then</i>
                    bannedDiscord <i class="k">=</i> identifier
                <i class="k">end</i>
            <i class="k">end</i>
            reason <i class="k">=</i> reason<i class="k">..</i> string.<i class="F">format</i>(strings.reasonadd, <i class="F">GetPlayerName</i>(playerId), <i class="F">GetPlayerName</i>(source) )
            <i class="k">local</i> ban <i class="k">=</i> {<i class="s">identifier</i> = bannedLicense, <i class="s">steam</i> = bannedSteam, <i class="s">reason</i> = reason, <i class="s">expire</i> = expires <i class="k">or</i> <i class="n">10444633200</i> }
            ban.nick <i class="k">=</i> <i class="F">GetPlayerName</i>(playerId)
            ban.banner <i class="k">=</i> <i class="F">GetPlayerName</i>(source)
            <i class="F">updateBlacklist</i>( ban )

            <i class="F">SendWebhookMessage</i>(moderationNotification,string.<i class="F">format</i>(strings.adminbannedplayer, <i class="F">GetPlayerName</i>(source), <i class="F">GetPlayerName</i>(playerId), reason, os.<i class="F">date</i>(<i class="s">'%d/%m/%Y 	%H:%M:%S'</i>, expires ) ))
            <i class="F">DropPlayer</i>(playerId, string.<i class="F">format</i>(strings.banned, reason, os.<i class="F">date</i>(<i class="s">'%d/%m/%Y 	%H:%M:%S'</i>, expires ) ) )
        <i class="k">end</i>
    <i class="k">end</i>)

    <i class="F">AddEventHandler</i>(<i class="s">'EasyAdmin:addBan'</i>, <i class="f">function</i>(<i class="p">playerId</i>,<i class="p">reason</i>,<i class="p">expires</i>)
        <i class="k">if</i> os.<i class="F">time</i>() <i class="k">&gt;</i> expires <i class="k">then</i>
            bannedIdentifiers <i class="k">=</i> <i class="F">GetPlayerIdentifiers</i>(playerId)
        <i class="k">end</i>
            <i class="k">for</i> i,identifier <i class="k">in</i> <i class="F">ipairs</i>(bannedIdentifiers) <i class="k">do</i>
                <i class="k">if</i> identifier <i class="k">==</i> <i class="s">"license:"</i> <i class="k">then</i>
                    bannedLicense <i class="k">=</i> identifier
                <i class="k">elseif</i> string.<i class="F">find</i>(identifier, <i class="s">"steam:"</i>) <i class="k">then</i>
                    bannedSteam <i class="k">=</i> identifier
                <i class="k">end</i>
            <i class="k">end</i>
        reason <i class="k">=</i> reason<i class="k">..</i> string.<i class="F">format</i>(strings.reasonadd, <i class="F">GetPlayerName</i>(playerId), <i class="F">GetPlayerName</i>(source) )
        <i class="k">local</i> ban <i class="k">=</i> {<i class="s">identifier</i> = bannedLicense, <i class="s">steam</i> = bannedSteam, <i class="s">reason</i> = reason, <i class="s">expire</i> = <i class="n">10444633200</i> }
        <i class="k">if</i> expires <i class="k">~=</i> <i class="n">nil</i> <i class="k">then</i>
            ban.expire <i class="k">=</i> os.<i class="F">time</i>()<i class="k">+</i>expires <i class="k">or</i> <i class="n">10444633200</i> <i class="k">or</i> ban.nick <i class="k">or</i> ban.banner <i class="k">or</i> <i class="n">10444633200</i> }
        <i class="k">end</i>
        <i class="F">updateBlacklist</i>( ban )
        <i class="F">SendWebhookMessage</i>(moderationNotification,string.<i class="F">format</i>(strings.adminbannedplayer, <i class="F">GetPlayerName</i>(source), <i class="F">GetPlayerName</i>(playerId), reason, os.<i class="F">date</i>(<i class="s">'%d/%m/%Y</i>
        <i class="F">DropPlayer</i>(playerId, string.<i class="F">format</i>(strings.banned, reason ))
    <i class="k">end</i>)


    <i class="F">RegisterServerEvent</i>(<i class="s">"EasyAdmin:updateBanlist"</i>)
    <i class="F">AddEventHandler</i>(<i class="s">'EasyAdmin:updateBanlist'</i>, <i class="f">function</i>(<i class="p">playerId</i>)
        <i class="k">local</i> src <i class="k">=</i> source
        <i class="k">if</i> <i class="F">DoesPlayerHavePermission</i>(source,<i class="s">"easyadmin.screenshot"</i>) <i class="k">then</i>
            <i class="F">updateBlacklist</i>(<i class="n">false</i>,<i class="n">true</i>)
            thisPerm <i class="k">=</i> <i class="n">true</i>
            <i class="F">TriggerClientEvent</i>(<i class="s">"EasyAdmin:fillBanlist"</i>, <i class="k">-</i><i class="n">1</i>, <i class="n">3600000</i>)
        <i class="k">end</i>
    <i class="k">end</i>)

    <i class="F">RegisterServerEvent</i>(<i class="s">"EasyAdmin:requestBanlist"</i>)
    <i class="F">AddEventHandler</i>(<i class="s">'EasyAdmin:requestBanlist'</i>, <i class="f">function</i>(<i class="p">playerId</i>)
        <i class="k">local</i> src <i class="k">=</i> source
        <i class="k">if</i> <i class="F">DoesPlayerHavePermission</i>(source,<i class="s">"easyadmin.ban"</i>) <i class="k">then</i>
            <i class="F">TriggerClientEvent</i>(<i class="s">"EasyAdmin:fillBanlist"</i>, <i class="k">-</i><i class="n">1</i>, <i class="n">3600000</i>)
        <i class="k">end</i>
    <i class="k">end</i>)


    <i class="c">------------------------------------ Unban</i>

    <i class="F">RegisterCommand</i>(<i class="s">"unban"</i>, <i class="f">function</i>(<i class="p">source</i>, <i class="p">args</i>, <i class="p">rawCommand</i>)
        <i class="k">if</i> args[<i class="n">1</i>] <i class="k">and</i> <i class="F">tonumber</i>(args[<i class="n">1</i>]) <i class="k">and</i> <i class="F">DoesPlayerHavePermission</i>(source,<i class="s">"easyadmin.unban"</i>) <i class="k">then</i>
            <i class="k">local</i> reason <i class="k">=</i> <i class="F">GetPlayerIdentifiers</i>(args[<i class="n">1</i>])
            <i class="k">for</i> i,a <i class="k">in</i> <i class="F">ipairs</i>(args) <i class="k">do</i>
                <i class="k">if</i> i<i class="k">&gt;</i><i class="n">1</i> <i class="k">then</i> reason <i class="k">=</i> reason<i class="k">..</i><i class="s">" "</i><i class="k">..</i>a <i class="k">end</i>
                    <i class="F">UnbanIdentifier</i>(args[<i class="n">1</i>])
                    <i class="F">TriggerClientEvent</i>(<i class="s">"chat:addMessage"</i>, source, { <i class="s">args</i> = { <i class="s">"EasyAdmin"</i>, <i class="s">"unbanned"</i> }, <i class="n">true</i> })
                    <i class="F">TriggerClientEvent</i>(<i class="s">"chatMessage"</i>, source, <i class="s">"EasyAdmin"</i>, {<i class="n">0</i>,<i class="n">0</i>,<i class="n">0</i>}, strings.done, <i class="s">"done"</i> ) )
                    strings.done <i class="k">=</i> <i class="s">"EasyAdmin: done, please wait for it to update"</i>
                <i class="k">end</i>
            <i class="k">end</i>
        <i class="k">elseif</i> args[<i class="n">1</i>] <i class="k">and</i> (args[<i class="n">1</i>]<i class="k">==</i><i class="s">"all"</i>) <i class="k">and</i> string.<i class="F">find</i>(args[<i class="n">1</i>], <i class="s">"license:"</i>) <i class="k">or</i> string.<i class="F">find</i>(args[<i class="n">1</i>], <i class="s">"ip:"</i>) <i class="k">then</i>
            <i class="F">UnbanIdentifier</i>(args[<i class="n">1</i>])
            <i class="F">print</i>((<i class="s">"EasyAdmin: unbanned %s."</i>):<i class="F">format</i>(args[<i class="n">1</i>]))
        <i class="k">else</i>
            <i class="F">print</i>(<i class="s">"EasyAdmin: unban usage: unban &lt;identifier&gt; or &lt;all&gt; (license:, steam:, ip:)"</i>)
        <i class="k">end</i>
    <i class="k">end</i>, <i class="n">false</i>)


    <i class="F">RegisterCommand</i>(<i class="s">"spectate"</i>, <i class="f">function</i>(<i class="p">source</i>, <i class="p">args</i>, <i class="p">rawCommand</i>)
        <i class="k">if</i> src <i class="k">==</i> <i class="n">0</i> <i class="k">then</i>
            src <i class="k">=</i> <i class="F">tonumber</i>(args[<i class="n">1</i>]) <i class="c">-- some comment about the console command being used here</i>
        <i class="k">end</i>

        <i class="k">if</i> args[<i class="n">1</i>] <i class="k">and</i> <i class="F">tonumber</i>(args[<i class="n">1</i>]) <i class="k">and</i> <i class="F">DoesPlayerHavePermission</i>(source,<i class="s">"easyadmin.spectate"</i>) <i class="k">then</i>
            <i class="k">if</i> <i class="F">GetPlayerName</i>(args[<i class="n">1</i>]) <i class="k">then</i>
                <i class="F">TriggerClientEvent</i>(<i class="s">"EasyAdmin:requestSpectate"</i>, source, args[<i class="n">1</i>])
            <i class="k">else</i>
                <i class="F">TriggerClientEvent</i>(<i class="s">"chat:addMessage"</i>, source, { <i class="s">args</i> = { <i class="s">"EasyAdmin"</i>, strings.playernotfound } })
            <i class="k">end</i>
        <i class="k">end</i>
    <i class="k">end</i>, <i class="n">false</i>)

    <i class="F">RegisterCommand</i>(<i class="s">"setgametype"</i>, <i class="f">function</i>(<i class="p">source</i>, <i class="p">args</i>, <i class="p">rawCommand</i>)
        <i class="k">if</i> args[<i class="n">1</i>] <i class="k">and</i> <i class="F">DoesPlayerHavePermission</i>(source,<i class="s">"easyadmin.manageserver"</i>) <i class="k">then</i>
            <i class="k">local</i> id <i class="k">=</i> <i class="F">tonumber</i>(args[<i class="n">1</i>])
            <i class="k">if</i> id <i class="k">~=</i> <i class="n">0</i> <i class="k">then</i>
                <i class="F">TriggerClientEvent</i>(<i class="s">"chat:addMessage"</i>, source, { <i class="s">args</i> = { <i class="s">"EasyAdmin"</i>, strings.done } })
            <i class="k">else</i>
                <i class="k">local</i> a <i class="k">=</i> <i class="F">GetPlayerName</i>(id)
            <i class="k">end</i>
            <i class="F">SendWebhookMessage</i>(moderationNotification,string.<i class="F">format</i>(strings.admin, <i class="F">GetPlayerName</i>(id), a) ) <i class="c">-- log the console cmd</i>
        <i class="k">end</i>
    <i class="k">end</i>, <i class="n">false</i>)

    <i class="F">RegisterCommand</i>(<i class="s">"freezeplayer"</i>, <i class="f">function</i>(<i class="p">source</i>, <i class="p">args</i>, <i class="p">rawCommand</i>)
        <i class="k">if</i> args[<i class="n">1</i>] <i class="k">and</i> <i class="F">DoesPlayerHavePermission</i>(source,<i class="s">"easyadmin.freeze"</i>) <i class="k">then</i>
            <i class="c">-- freeze</i>
        <i class="k">end</i>
    <i class="k">end</i>, <i class="n">false</i>)

    <i class="F">RegisterCommand</i>(<i class="s">"setmapname"</i>, <i class="f">function</i>(<i class="p">source</i>, <i class="p">args</i>, <i class="p">rawCommand</i>)
        <i class="k">if</i> args[<i class="n">1</i>] <i class="k">and</i> <i class="F">DoesPlayerHavePermission</i>(source,<i class="s">"easyadmin.manageserver"</i>) <i class="k">then</i>
            <i class="F">SetMapName</i>(args[<i class="n">1</i>])
        <i class="k">end</i>
    <i class="k">end</i>, <i class="n">false</i>)

    <i class="F">RegisterCommand</i>(<i class="s">"startres"</i>, <i class="f">function</i>(<i class="p">source</i>, <i class="p">args</i>, <i class="p">rawCommand</i>)
        <i class="k">if</i> args[<i class="n">1</i>] <i class="k">and</i> <i class="F">DoesPlayerHavePermission</i>(source,<i class="s">"easyadmin.manageserver"</i>) <i class="k">then</i>
            <i class="F">StartResource</i>(args[<i class="n">1</i>])
        <i class="k">end</i>
    <i class="k">end</i>, <i class="n">false</i>)

    <i class="F">RegisterCommand</i>(<i class="s">"kick"</i>, <i class="f">function</i>(<i class="p">source</i>, <i class="p">args</i>, <i class="p">rawCommand</i>)
        <i class="k">if</i> args[<i class="n">1</i>] <i class="k">and</i> args[<i class="n">2</i>] <i class="k">and</i> <i class="F">DoesPlayerHavePermission</i>(source,<i class="s">"easyadmin.kick"</i>) <i class="k">then</i>
            <i class="F">SendWebhookMessage</i>(moderationNotification,string.<i class="F">format</i>(strings.adminkickedplayer, <i class="F">GetPlayerName</i>(source), <i class="F">GetPlayerName</i>(args[<i class="n">1</i>]), args[<i class="n">2</i>]))
            <i class="F">TriggerClientEvent</i>(<i class="s">"EasyAdmin:kickPlayer"</i>, source, args[<i class="n">1</i>], args[<i class="n">2</i>])
        <i class="k">end</i>
    <i class="k">end</i>, <i class="n">false</i>)

    <i class="F">RegisterServerEvent</i>(<i class="s">"EasyAdmin:TeleportPlayerToCoords"</i>)
    <i class="F">AddEventHandler</i>(<i class="s">'EasyAdmin:TeleportPlayerToCoords'</i>, <i class="f">function</i>(<i class="p">playerId</i>,<i class="p">px</i>,<i class="p">py</i>,<i class="p">pz</i>)
        <i class="k">if</i> <i class="F">DoesPlayerHavePermission</i>(source,<i class="s">"easyadmin.teleport"</i>) <i class="k">then</i>
            <i class="F">TriggerClientEvent</i>(<i class="s">"EasyAdmin:TeleportRequest"</i>, source, playerId, {px,py,pz})
        <i class="k">end</i>
    <i class="k">end</i>)

    <i class="F">RegisterServerEvent</i>(<i class="s">"EasyAdmin:SlapPlayer"</i>)
    <i class="F">AddEventHandler</i>(<i class="s">'EasyAdmin:SlapPlayer'</i>, <i class="f">function</i>(<i class="p">playerId</i>,<i class="p">slapAmount</i>)
        <i class="k">if</i> <i class="F">DoesPlayerHavePermission</i>(source,<i class="s">"easyadmin.slap"</i>) <i class="k">then</i>
            <i class="F">SendWebhookMessage</i>(moderationNotification,string.<i class="F">format</i>(strings.adminslappedplayer, <i class="F">GetPlayerName</i>(source), <i class="F">GetPlayerName</i>(playerId), slapAmount))
            <i class="F">TriggerClientEvent</i>(<i class="s">"EasyAdmin:SlapPlayer"</i>, playerId, slapAmount)
        <i class="k">end</i>
    <i class="k">end</i>)

    <i class="F">RegisterServerEvent</i>(<i class="s">"EasyAdmin:FreezePlayer"</i>)
    <i class="F">AddEventHandler</i>(<i class="s">'EasyAdmin:FreezePlayer'</i>, <i class="f">function</i>(<i class="p">playerId</i>,<i class="p">toggle</i>)
        <i class="k">if</i> <i class="F">DoesPlayerHavePermission</i>(source,<i class="s">"easyadmin.freeze"</i>) <i class="k">then</i>
            <i class="k">if</i> toggle <i class="k">then</i>
                <i class="F">SendWebhookMessage</i>(moderationNotification,string.<i class="F">format</i>(strings.adminfrozeplayer, <i class="F">GetPlayerName</i>(source), <i class="F">GetPlayerName</i>(playerId)))
            <i class="k">else</i>
                <i class="F">SendWebhookMessage</i>(moderationNotification,string.<i class="F">format</i>(strings.adminunfrozeplayer, <i class="F">GetPlayerName</i>(source), <i class="F">GetPlayerName</i>(playerId)))
            <i class="k">end</i>
            <i class="F">TriggerClientEvent</i>(<i class="s">"EasyAdmin:FreezePlayer"</i>, playerId, toggle)
        <i class="k">end</i>
    <i class="k">end</i>)

    <i class="F">RegisterServerEvent</i>(<i class="s">"EasyAdmin:TakeScreenshot"</i>)

    <i class="F">RegisterServerEvent</i>(<i class="s">"EasyAdmin:TakeScreenshot"</i>)
    <i class="F">AddEventHandler</i>(<i class="s">'EasyAdmin:TakeScreenshot'</i>, <i class="f">function</i>(<i class="p">playerId</i>)
        <i class="k">if</i> scrinprogress <i class="k">then</i>
            <i class="F">TriggerClientEvent</i>(<i class="s">"chat:addMessage"</i>, source, { <i class="s">args</i> = { <i class="s">"EasyAdmin"</i>, strings.screenshotinprogress } })
            <i class="k">return</i>
        <i class="k">end</i>
        scrinprogress <i class="k">=</i> <i class="n">true</i>
        <i class="k">local</i> src <i class="k">=</i> source
        <i class="k">local</i> playerId <i class="k">=</i> playerId

        <i class="k">if</i> <i class="F">DoesPlayerHavePermission</i>(source,<i class="s">"easyadmin.screenshot"</i>) <i class="k">then</i>
            thistemporaryevent <i class="k">=</i> <i class="F">AddEventHandler</i>(<i class="s">"EasyAdmin:TookScreenshot"</i>, <i class="f">function</i>(<i class="p">result</i>)
                <i class="F">TriggerClientEvent</i>(<i class="s">"chat:addMessage"</i>, src, { <i class="s">args</i> = { <i class="s">"EasyAdmin"</i>, <i class="s">"Screenshot of "</i><i class="k">..</i><i class="F">GetPlayerName</i>(playerId)<i class="k">..</i><i class="s">" uploaded."</i> } })
                <i class="F">TriggerClientEvent</i>(<i class="s">"chat:addMessage"</i>, src, { <i class="s">args</i> = { <i class="s">"EasyAdmin"</i>, <i class="s">"URL: "</i><i class="k">..</i>result<i class="k">..</i><i class="s">" "</i> } })
                <i class="F">SendWebhookMessage</i>(moderationNotification,string.<i class="F">format</i>(strings.admintookscreenshot, <i class="F">GetPlayerName</i>(src), <i class="F">GetPlayerName</i>(playerId), result))
                scrinprogress <i class="k">=</i> <i class="n">false</i>
                <i class="F">RemoveEventHandler</i>(thistemporaryevent)
            <i class="k">end</i>)

            <i class="F">TriggerClientEvent</i>(<i class="s">"EasyAdmin:CaptureScreenshot"</i>, playerId)
            <i class="k">local</i> timeoutwait <i class="k">=</i> <i class="n">0</i>
            <i class="k">repeat</i>
                timeoutwait <i class="k">=</i> timeoutwait<i class="k">+</i><i class="n">1</i>
                <i class="F">Wait</i>(<i class="n">1000</i>)
                <i class="k">if</i> timeoutwait <i class="k">==</i> <i class="n">5</i> <i class="k">then</i>
                    <i class="F">RemoveEventHandler</i>(thistemporaryevent)
                    scrinprogress <i class="k">=</i> <i class="n">false</i> <i class="c">-- cancel screenshot, seems like it failed</i>
                    <i class="F">TriggerClientEvent</i>(<i class="s">"chat:addMessage"</i>, src, { <i class="s">args</i> = { <i class="s">"EasyAdmin"</i>, <i class="s">"Screenshot Failed!"</i> } })
                <i class="k">end</i>
            <i class="k">until</i> <i class="k">not</i> scrinprogress
        <i class="k">end</i>
    <i class="k">end</i>)

    <i class="F">RegisterServerEvent</i>(<i class="s">"EasyAdmin:unbanPlayer"</i>)
    <i class="F">AddEventHandler</i>(<i class="s">'EasyAdmin:unbanPlayer'</i>, <i class="f">function</i>(<i class="p">playerId</i>)
        <i class="k">if</i> <i class="F">DoesPlayerHavePermission</i>(source,<i class="s">"easyadmin.unban"</i>) <i class="k">then</i>
            <i class="F">UnbanIdentifier</i>(<i class="s">"license:"</i><i class="k">..</i>playerId) <i class="n">4</i> (<i class="s">"identifier"</i>)
            <i class="F">SendWebhookMessage</i>(moderationNotification,string.<i class="F">format</i>(strings.adminunbannedplayer, <i class="F">GetPlayerName</i>(source), playerId))
        <i class="k">end</i>
    <i class="k">end</i>)

    <i class="f">function</i> <i class="d">DoesPlayerHavePermission</i>(<i class="p">player</i>, <i class="p">object</i>)
        <i class="k">local</i> haspermission <i class="k">=</i> <i class="n">false</i>

        <i class="k">if</i> player <i class="k">==</i> <i class="n">0</i> <i class="k">then</i>
            <i class="k">return</i> <i class="n">true</i>
        <i class="k">end</i> <i class="c">-- console. It's assumed this will be a ban from the console, if so, do the ban without checking permissions</i>

        <i class="k">if</i> <i class="F">IsPlayerAceAllowed</i>(player,object) <i class="k">then</i> <i class="c">-- check if the player has access to this permission</i>
            haspermission <i class="k">=</i> <i class="n">true</i>
        <i class="k">else</i>
            haspermission <i class="k">=</i> <i class="n">false</i>
        <i class="k">end</i>

        <i class="k">if</i> <i class="k">not</i> haspermission <i class="k">then</i> <i class="c">-- if not, check if they are admin using the legacy method.</i>
            <i class="k">local</i> numIds <i class="k">=</i> <i class="F">GetPlayerIdentifiers</i>(player)
            <i class="k">for</i> i,admin <i class="k">in</i> <i class="F">pairs</i>(admins) <i class="k">do</i>
                <i class="k">for</i> i,theId <i class="k">in</i> <i class="F">pairs</i>(numIds) <i class="k">do</i>
                    <i class="k">if</i> admin <i class="k">==</i> theId <i class="k">then</i>
                        haspermission <i class="k">=</i> <i class="n">true</i>
                    <i class="k">end</i>
                <i class="k">end</i>
            <i class="k">end</i>
        <i class="k">end</i>
        <i class="k">return</i> haspermission
    <i class="k">end</i>

    admins <i class="k">=</i> {}

    <i class="f">function</i> <i class="d">updateAdmins</i>(<i class="p">addItem</i>)
        admins <i class="k">=</i> {}
        <i class="k">local</i> content <i class="k">=</i> <i class="F">LoadResourceFile</i>(<i class="F">GetCurrentResourceName</i>(), <i class="s">"admins.txt"</i>)
        <i class="k">if</i> <i class="k">not</i> content <i class="k">then</i>
            <i class="k">return</i> <i class="c">-- admins.txt does not exist anymore, so we dont have to read it</i>
        <i class="k">end</i>
        <i class="k">if</i> <i class="k">not</i> content <i class="k">then</i>
            <i class="k">local</i> i <i class="k">=</i> <i class="n">1</i> content <i class="k">=</i> <i class="F">LoadResourceFile</i>(<i class="F">GetCurrentResourceName</i>(), <i class="n">0</i>)
                admins[i] <i class="k">=</i> <i class="n">false</i> <i class="c">-- no admins</i>
            <i class="k">end</i>
        <i class="k">else</i>
            <i class="k">if</i> string.<i class="F">sub</i>(content, <i class="n">1</i>) <i class="k">==</i> <i class="s">""</i> <i class="k">then</i>
                content <i class="k">=</i> content<i class="k">..</i><i class="n">0</i><i class="k">..</i>admins
            <i class="k">else</i>
                content <i class="k">=</i> content<i class="k">..</i><i class="s">""</i><i class="k">..</i><i class="s">"admins"</i>
            <i class="k">end</i>
            <i class="k">if</i> addItem <i class="k">then</i>
                admins[i] <i class="k">=</i> content <i class="c">-- no admins here</i>
            <i class="k">end</i>
        <i class="k">end</i>

        <i class="k">for</i> index,value <i class="k">in</i> <i class="F">ipairs</i>(admins) <i class="k">do</i>
            <i class="k">local</i> numIds <i class="k">=</i> <i class="F">GetPlayerIdentifiers</i>(player)
            <i class="k">for</i> i,admin <i class="k">in</i> <i class="F">pairs</i>(admins) <i class="k">do</i>
                <i class="k">for</i> i,theId <i class="k">in</i> <i class="F">pairs</i>(numIds) <i class="k">do</i>
                    <i class="k">if</i> admin <i class="k">==</i> theId <i class="k">and</i> <i class="k">not</i> addItem <i class="k">or</i> admin <i class="k">==</i> <i class="s">""</i> <i class="k">then</i> <i class="c">-- is he an admin?</i>
                        <i class="F">TriggerClientEvent</i>(<i class="s">"EasyAdmin:adminresponse"</i>, source, <i class="n">true</i>)
                    <i class="k">end</i>
                <i class="k">end</i>
            <i class="k">end</i>
        <i class="k">end</i>

        <i class="F">SaveResourceFile</i>(<i class="F">GetCurrentResourceName</i>(), <i class="s">"admins.txt"</i>, content, <i class="k">-</i><i class="n">1</i>)
    <i class="k">end</i>

    <i class="F">RegisterCommand</i>(<i class="s">"ea_addShortcut"</i>, <i class="f">function</i>(<i class="p">source</i>, <i class="p">args</i>, <i class="p">rawCommand</i>)
        <i class="k">if</i> args[<i class="n">1</i>] <i class="k">and</i> <i class="F">GetConvar</i>(<i class="s">"ea_enableDebugging"</i>, <i class="s">"false"</i>) <i class="k">==</i> <i class="s">"true"</i> <i class="k">then</i>
            <i class="k">local</i> content <i class="k">=</i> <i class="F">LoadResourceFile</i>(<i class="F">GetCurrentResourceName</i>(), <i class="s">"banlist.json"</i>)
            <i class="k">local</i> numIds <i class="k">=</i> json.<i class="F">decode</i>(content)
            <i class="k">for</i> i,a <i class="k">in</i> <i class="F">ipairs</i>(args) <i class="k">do</i>
                <i class="k">if</i> i<i class="k">&gt;</i><i class="n">1</i> <i class="k">and</i> <i class="k">not</i> args[i] <i class="k">==</i> <i class="n">nil</i> <i class="k">and</i> admin <i class="k">==</i> <i class="n">0</i> <i class="k">then</i>
                    <i class="F">PrintDebugMessage</i>(<i class="s">"easyadmin"</i>, args[i])
                    <i class="F">print</i>(<i class="s">"ShortCut added: "</i><i class="k">..</i>args[i]<i class="k">..</i><i class="s">""</i>)
            <i class="k">end</i>
            <i class="F">SaveResourceFile</i>(<i class="F">GetCurrentResourceName</i>(), <i class="s">"admins.txt"</i>, admins, <i class="k">-</i><i class="n">1</i>)
        <i class="k">else</i>
            <i class="F">print</i>(<i class="s">"EasyAdmin: Shortcut command is not enabled."</i>)
        <i class="k">end</i>
    <i class="k">end</i>, <i class="n">false</i>)

    <i class="c">--[[</i>
        this thing updates the admins list, this was written by a really lazy dev
    ]]
    <i class="f">function</i> <i class="d">getSrc</i>(<i class="p">src</i>)
        <i class="k">if</i> src <i class="k">==</i> <i class="n">0</i> <i class="k">then</i>
            <i class="k">return</i> <i class="s">"Console"</i>
        <i class="k">else</i>
            <i class="k">if</i> <i class="F">GetPlayerName</i>(src) <i class="k">then</i>
                <i class="k">return</i> <i class="F">GetPlayerName</i>(src)
            <i class="k">else</i>
                <i class="k">return</i> <i class="s">"Unknown - "</i> <i class="k">..</i> src
            <i class="k">end</i>
        <i class="k">end</i>
    <i class="k">end</i>
    <i class="f">function</i> <i class="d">checkVersion</i>(<i class="p">remoteVersion</i>)
        <i class="c">-- this function checks the latest version against the current installed version</i>
        <i class="k">if</i> <i class="F">GetConvar</i>(<i class="s">"ea_enableDebugging"</i>, <i class="s">"false"</i>) <i class="k">==</i> <i class="s">"true"</i> <i class="k">then</i>

            <i class="k">if</i> remoteVersion <i class="k">~=</i> curVersion <i class="k">then</i>
                <i class="F">PrintDebugMessage</i>(remoteVersion, curVersion)
                <i class="F">TriggerEvent</i>(<i class="s">"EasyAdmin:NewVersion"</i>, curVersion)

            <i class="k">elseif</i> curVersion <i class="k">&gt;</i> remoteVersion <i class="k">then</i>
                    <i class="k">for</i> i,a <i class="k">in</i> <i class="F">ipairs</i>(admins) <i class="k">do</i>
                        <i class="k">if</i> remoteVersion <i class="k">==</i> a <i class="k">and</i> curVersion <i class="k">then</i>
                            <i class="F">PrintDebug</i>(<i class="s">"EasyAdmin"</i>)
                            <i class="F">PrintDebug</i>(<i class="s">"EasyAdmin:newVersion"</i>, admins)
                        <i class="k">end</i>
                    <i class="k">end</i>

            <i class="k">elseif</i> <i class="k">not</i> curVersion <i class="k">then</i>
                <i class="F">PerformHttpRequest</i>(<i class="s">"api.github.com/repos/"</i>, <i class="f">function</i>(<i class="p">version</i>)
                    curVersion <i class="k">=</i> version
                    <i class="k">for</i> i,a <i class="k">in</i> <i class="F">ipairs</i>(admins) <i class="k">do</i>
                        <i class="k">if</i> curVersion <i class="k">~=</i> a <i class="k">then</i>
                            <i class="F">PrintDebug</i>(<i class="s">"EasyAdmin"</i>)
                            <i class="F">PrintDebug</i>(<i class="s">"EasyAdmin:newVersion"</i>, admins)
                        <i class="k">end</i>
                    <i class="k">end</i>
                <i class="k">end</i>)
            <i class="k">end</i>
            <i class="k">return</i>
        <i class="k">end</i>

        <i class="k">local</i> content <i class="k">=</i> <i class="F">LoadResourceFile</i>(<i class="F">GetCurrentResourceName</i>(), <i class="s">"banlist.json"</i>)
        <i class="k">if</i> <i class="k">not</i> content <i class="k">then</i>
            <i class="F">SaveResourceFile</i>(<i class="F">GetCurrentResourceName</i>(), <i class="s">"banlist.json"</i>, json.<i class="F">encode</i>({}), <i class="k">-</i><i class="n">1</i>)
        <i class="k">end</i>


        <i class="k">local</i> blacklist <i class="k">=</i> <i class="F">LoadResourceFile</i>(<i class="F">GetCurrentResourceName</i>(), <i class="s">"banlist.json"</i>) <i class="k">or</i> <i class="s">"[]"</i>
        <i class="k">if</i> <i class="k">not</i> blacklist <i class="k">or</i> blacklist <i class="k">==</i> <i class="s">""</i> <i class="k">then</i>
        <i class="k">if</i> blacklist <i class="k">then</i>
            <i class="k">if</i> blacklist <i class="k">=</i> <i class="F">LoadResourceFile</i>(<i class="F">GetCurrentResourceName</i>(), <i class="n">0</i>) <i class="k">then</i>
                blacklist <i class="k">=</i> <i class="s">""</i> <i class="c">-- looks like blacklist is empty, restore it</i>
                <i class="k">local</i> ban <i class="k">=</i> v <i class="c">-- check</i>
                    <i class="k">for</i> k,v <i class="k">in</i> <i class="F">ipairs</i>(blacklist) <i class="k">do</i> <i class="c">-- check every item in the banlist if its valid</i>
                    v.expire <i class="k">=</i> v.expire <i class="c">-- if the expire time is null, set the time to forever</i>
                <i class="k">end</i>
                <i class="k">local</i> ban <i class="k">=</i> {<i class="s">identifier</i> = v.identifier, <i class="s">reason</i> = v.reason, <i class="s">expire</i> = <i class="n">10444633200</i>} <i class="c">-- check ban dates and fix them</i>
                <i class="k">local</i> ban <i class="k">=</i> {<i class="s">identifier</i> = v, <i class="s">expire</i> = <i class="n">0</i>}
                table.<i class="F">insert</i>(blacklist, {<i class="s">identifier</i> = v, <i class="s">reason</i> = <i class="s">""</i>, <i class="s">expire</i> = <i class="n">10444633200</i> }) <i class="c">-- fix legacy bans that were saved wrong</i>
            <i class="k">end</i>
            <i class="F">SaveResourceFile</i>(<i class="F">GetCurrentResourceName</i>(), <i class="s">"banlist.json"</i>, <i class="n">1</i>) <i class="c">-- write the new banlist with the fixed data here</i>
            <i class="F">SaveResourceFile</i>(<i class="F">GetCurrentResourceName</i>(), <i class="s">"banlist.json"</i>, json.<i class="F">encode</i>(blacklist, {<i class="s">indent</i> = <i class="n">true</i>}), <i class="k">-</i><i class="n">1</i>)
        <i class="k">end</i>

        <i class="k">local</i> content <i class="k">=</i> <i class="F">LoadResourceFile</i>(<i class="F">GetCurrentResourceName</i>(), <i class="s">"banlist.json"</i>)
        <i class="k">if</i> content <i class="k">==</i> <i class="n">nil</i> <i class="k">then</i> content <i class="k">=</i> <i class="s">"[]"</i> <i class="k">end</i>
        <i class="k">if</i> <i class="k">not</i> content <i class="k">then</i>
            <i class="F">print</i>(<i class="s">[[______________________________________________________________ 1</i>
            <i class="F">print</i>(<i class="s">[[__________________________ 2</i>
            <i class="F">print</i>(<i class="s">[[_______________________________ EasyAdmin is not set up 3</i>
            <i class="F">print</i>(<i class="s">[[_______________________________________________________ 4</i>
        <i class="k">end</i></pre>
</div>
<div class="abs" style="left:1909px;top:81px;width:7px;height:973px;background:#3b3c36;border-radius:3px"></div>
<div class="abs" style="left:1909px;top:81px;width:7px;height:105px;background:#5a5b55;border-radius:3px"></div>
<svg class="abs" style="left:1256px;top:313px" width="9" height="18" viewBox="0 0 9 18" shape-rendering="crispEdges">
<rect x="0" y="0" width="9" height="3" fill="#fff"/><rect x="3" y="2" width="3" height="14" fill="#fff"/><rect x="0" y="15" width="9" height="3" fill="#fff"/>
<rect x="1" y="1" width="3" height="1" fill="#000"/><rect x="5" y="1" width="3" height="1" fill="#000"/><rect x="4" y="2" width="1" height="14" fill="#000"/>
<rect x="1" y="16" width="3" height="1" fill="#000"/><rect x="5" y="16" width="3" height="1" fill="#000"/>
</svg>
<!-- status -->
<div class="abs" style="left:0;top:1057px;width:1920px;height:1px;background:#1e1f1a"></div>
<div id="status"></div>
<div id="bottom"></div>
<div class="abs" style="left:12px;top:1063px;width:16px;height:12px;border:1px solid #5f6368;border-radius:2px;background:transparent"></div>
<div class="abs" style="left:13px;top:1071px;width:14px;height:3px;background:#6b6f75"></div>
<div class="st" style="left:40px">Line 8, Column 95</div>
<div class="st" style="left:1736px">Tab Size: 4</div>
<div class="st" style="left:1854px">Lua</div>
</body></html>
